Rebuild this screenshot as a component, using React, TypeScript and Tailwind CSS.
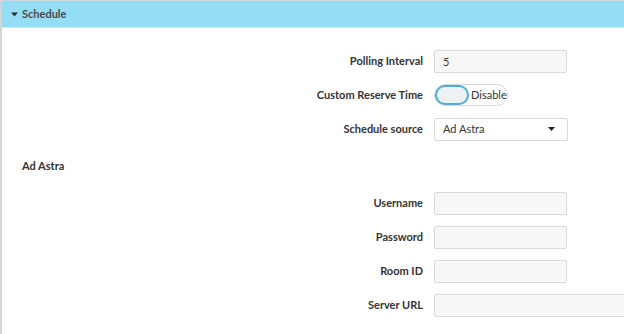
import { useState } from 'react'

function Row({ label, children }: { label: string; children: React.ReactNode }) {
  return (
    <div className="flex items-center h-[34px]">
      <label className="w-[421px] shrink-0 text-right text-[11px] font-bold text-[#333]">{label}</label>
      <div className="ml-[11px] flex-1 flex items-center">{children}</div>
    </div>
  )
}

const inputCls =
  'w-[133px] h-[23px] shrink-0 rounded-[2px] border border-[#d9d9d9] bg-[#f7f7f7] px-2 text-[11px] text-[#333] outline-none'

export default function App() {
  const [poll, setPoll] = useState('5')

  return (
    <div className="w-[624px] h-[334px] overflow-hidden bg-white border-l-2 border-t border-[#d4d4d4]" style={{ fontFamily: 'Lato, "Open Sans", sans-serif' }}>
      {/* Header */}
      <div className="h-[27px] flex items-center bg-[#95dcf5] border-b border-[#c6ecf9] pl-[9px] text-[11px] font-bold text-[#4a4a4a]">
        <svg width="7" height="5" viewBox="0 0 7 5" className="mr-[4px]">
          <path d="M0 0.5 L7 0.5 L3.5 4.5 Z" fill="#333" />
        </svg>
        Schedule
      </div>

      <div className="pt-[16px]">
        <Row label="Polling Interval">
          <input className={inputCls} value={poll} onChange={e => setPoll(e.target.value)} />
        </Row>
        <Row label="Custom Reserve Time">
          <div className="flex items-center h-[22px] w-[74px] rounded-full border border-[#d9d9d9] bg-white">
            <div className="h-[20px] w-[34px] rounded-full border-2 border-[#4aaed6] bg-[#eef1f4]" />
            <span className="ml-[2px] text-[11px] text-[#333]">Disable</span>
          </div>
        </Row>
        <Row label="Schedule source">
          <div className="w-[134px] h-[23px] rounded-[2px] border border-[#d9d9d9] bg-white flex items-center justify-between px-2 text-[11px] text-[#333]">
            <span>Ad Astra</span>
            <svg width="7" height="4" viewBox="0 0 7 4" className="mr-[4px]">
              <path d="M0 0 L7 0 L3.5 4 Z" fill="#222" />
            </svg>
          </div>
        </Row>

        <div className="h-[40px] flex items-center pl-[20px] text-[11px] font-bold text-[#333]">Ad Astra</div>

        <Row label="Username">
          <input className={inputCls} />
        </Row>
        <Row label="Password">
          <input type="password" className={inputCls} />
        </Row>
        <Row label="Room ID">
          <input className={inputCls} />
        </Row>
        <Row label="Server URL">
          <input className="w-[220px] h-[23px] shrink-0 rounded-[2px] border border-[#d9d9d9] bg-[#f7f7f7] px-2 text-[11px] outline-none" />
        </Row>
      </div>
    </div>
  )
}
